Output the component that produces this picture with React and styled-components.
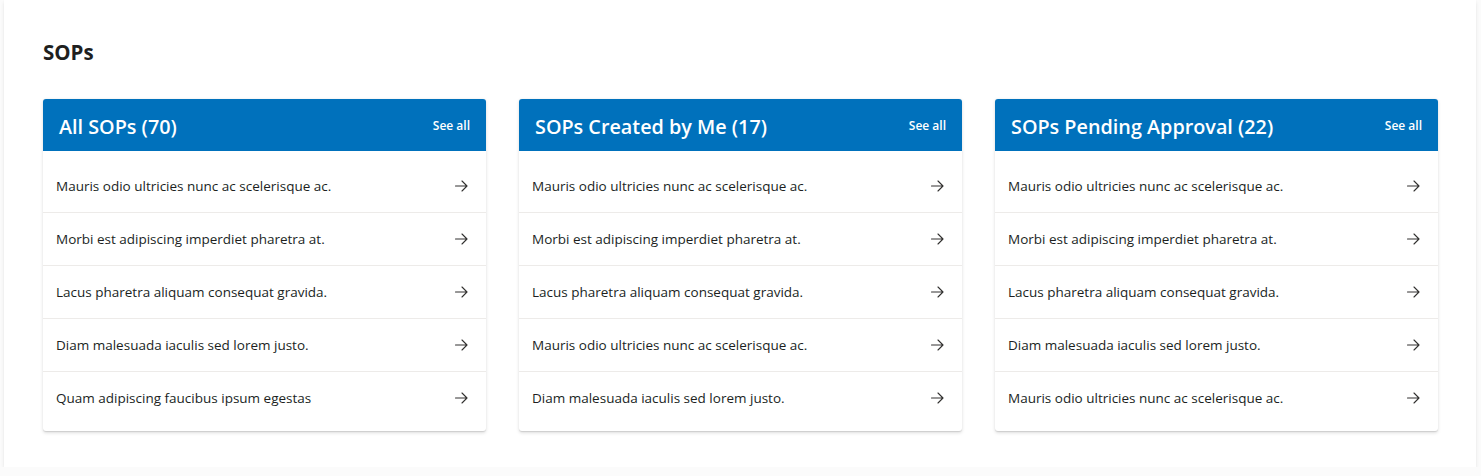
import React from 'react';
import styled, { createGlobalStyle } from 'styled-components';

const GlobalStyle = createGlobalStyle`
  html, body {
    margin: 0;
    padding: 0;
    background: #fbfbfb;
  }
  body {
    font-family: "Open Sans", "Noto Sans", "Liberation Sans", sans-serif;
    color: #201f1e;
  }
`;

const Panel = styled.section`
  box-sizing: border-box;
  margin: 0 5px 0 4px;
  height: 467px;
  padding: 38px 39px 0 39px;
  background: #fff;
  box-shadow: 0 1.6px 3.6px rgba(0, 0, 0, 0.09), 0 0.3px 0.9px rgba(0, 0, 0, 0.07);
`;

const Heading = styled.h2`
  margin: 0 0 33px;
  font-size: 20.5px;
  line-height: 28px;
  font-weight: 700;
  color: #201f1e;
`;

const Grid = styled.div`
  display: grid;
  grid-template-columns: repeat(3, 443px);
  column-gap: 33px;
`;

const Card = styled.div`
  background: #fff;
  border-radius: 3px;
  overflow: hidden;
  box-shadow: 0 1.6px 3.6px rgba(0, 0, 0, 0.13), 0 0.3px 0.9px rgba(0, 0, 0, 0.1);
`;

const Header = styled.div`
  display: flex;
  align-items: center;
  justify-content: space-between;
  height: 52px;
  padding: 0 16px;
  background: #0071bc;
  color: #fff;
`;

const Title = styled.div`
  font-size: 19.8px;
  font-weight: 600;
  margin-top: 2px;
`;

const SeeAll = styled.a`
  font-size: 12px;
  font-weight: 600;
  color: #fff;
  cursor: pointer;
`;

const List = styled.ul`
  list-style: none;
  margin: 0;
  padding: 9px 0 7px;
`;

const Row = styled.li`
  display: flex;
  align-items: center;
  justify-content: space-between;
  height: 52px;
  padding: 0 18px 0 13px;
  font-size: 13.5px;
  color: #201f1e;
  border-top: ${({ $first }) => ($first ? 'none' : '1px solid #edebe9')};
`;

const Arrow = () => (
  <svg width="13" height="12" viewBox="0 0 13 12" fill="none">
    <path d="M0.5 6H12M7 1l5 5-5 5" stroke="#323130" strokeWidth="1.1" strokeLinecap="round" strokeLinejoin="round" />
  </svg>
);

const cards = [
  {
    title: 'All SOPs (70)',
    items: [
      'Mauris odio ultricies nunc ac scelerisque ac.',
      'Morbi est adipiscing imperdiet pharetra at.',
      'Lacus pharetra aliquam consequat gravida.',
      'Diam malesuada iaculis sed lorem justo.',
      'Quam adipiscing faucibus ipsum egestas',
    ],
  },
  {
    title: 'SOPs Created by Me (17)',
    items: [
      'Mauris odio ultricies nunc ac scelerisque ac.',
      'Morbi est adipiscing imperdiet pharetra at.',
      'Lacus pharetra aliquam consequat gravida.',
      'Mauris odio ultricies nunc ac scelerisque ac.',
      'Diam malesuada iaculis sed lorem justo.',
    ],
  },
  {
    title: 'SOPs Pending Approval (22)',
    items: [
      'Mauris odio ultricies nunc ac scelerisque ac.',
      'Morbi est adipiscing imperdiet pharetra at.',
      'Lacus pharetra aliquam consequat gravida.',
      'Diam malesuada iaculis sed lorem justo.',
      'Mauris odio ultricies nunc ac scelerisque ac.',
    ],
  },
];

export default function App() {
  return (
    <>
      <GlobalStyle />
      <Panel>
        <Heading>SOPs</Heading>
        <Grid>
          {cards.map((card) => (
            <Card key={card.title}>
              <Header>
                <Title>{card.title}</Title>
                <SeeAll>See all</SeeAll>
              </Header>
              <List>
                {card.items.map((item, i) => (
                  <Row key={i} $first={i === 0}>
                    <span>{item}</span>
                    <Arrow />
                  </Row>
                ))}
              </List>
            </Card>
          ))}
        </Grid>
      </Panel>
    </>
  );
}
